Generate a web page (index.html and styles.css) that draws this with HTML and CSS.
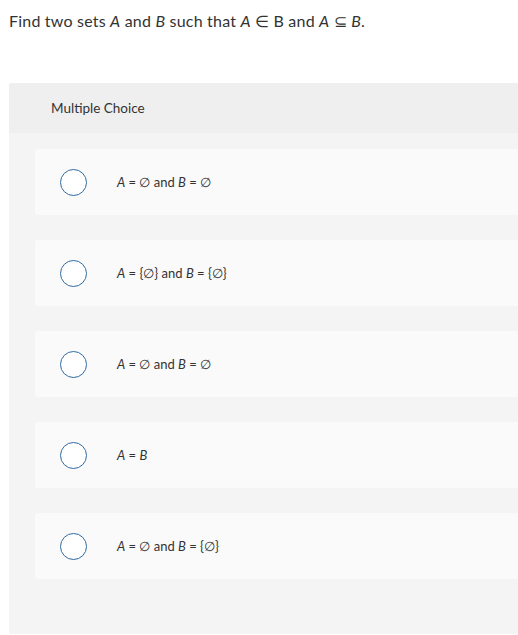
FILE: index.html
```html
<!DOCTYPE html>
<html>
<head>
<meta charset="utf-8">
<link rel="stylesheet" href="styles.css">
</head>
<body>
<p class="question">Find two sets <i>A</i> and <i>B</i> such that <i>A</i> ∈ B and <i>A</i> ⊆ <i>B</i>.</p>
<div class="panel">
  <div class="panel-head">Multiple Choice</div>
  <div class="panel-body">
    <div class="option"><span class="radio"></span><span class="label"><i>A</i> = ∅ and <i>B</i> = ∅</span></div>
    <div class="option"><span class="radio"></span><span class="label"><i>A</i> = {∅} and <i>B</i> = {∅}</span></div>
    <div class="option"><span class="radio"></span><span class="label"><i>A</i> = ∅ and <i>B</i> = ∅</span></div>
    <div class="option"><span class="radio"></span><span class="label"><i>A</i> = <i>B</i></span></div>
    <div class="option"><span class="radio"></span><span class="label"><i>A</i> = ∅ and <i>B</i> = {∅}</span></div>
  </div>
</div>
</body>
</html>
```
FILE: styles.css
```css
html, body {
  margin: 0;
  padding: 0;
  background: #fff;
  overflow: hidden;
}
body {
  padding-left: 9px;
  font-family: "Lato", "Open Sans", sans-serif;
  color: #333;
}
.question {
  margin: 10px 0 0;
  font-size: 16px;
  line-height: 22px;
  letter-spacing: 0.2px;
}
.panel {
  margin-top: 51px;
  width: 509px;
  height: 551px;
  background: #f4f4f4;
  border-radius: 2px;
}
.panel-head {
  height: 50px;
  background: #efefef;
  display: flex;
  align-items: center;
  padding-left: 42px;
  font-size: 13.5px;
  border-radius: 2px 2px 0 0;
}
.panel-body {
  padding: 16px 0 0 26px;
  display: flex;
  flex-direction: column;
  gap: 25px;
}
.option {
  height: 66px;
  background: #fafafa;
  border-radius: 3px 0 0 3px;
  display: flex;
  align-items: center;
  padding-left: 25px;
}
.radio {
  width: 25px;
  height: 25px;
  border: 1.5px solid #2f6aa3;
  border-radius: 50%;
  background: #fff;
  flex: none;
}
.label {
  margin-left: 30px;
  font-size: 13px;
}
.label i {
  font-style: italic;
}
```
